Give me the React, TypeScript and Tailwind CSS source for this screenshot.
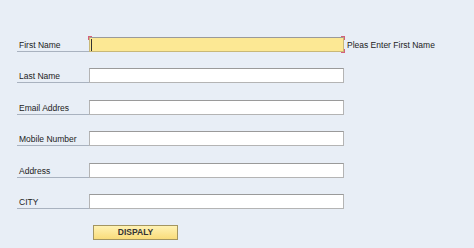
import React from 'react';

const font = { fontFamily: '"Liberation Sans", Arial, sans-serif' };

const fields = ['First Name', 'Last Name', 'Email Addres', 'Mobile Number', 'Address', 'CITY'];

function Field({ label, focused }: { label: string; focused?: boolean }) {
  return (
    <div className="flex items-end h-[15px]">
      <div className="w-[72px] border-b border-[#a9b2bf] pl-[2px] pb-[1px] text-[8.5px] leading-[10px] text-[#222]">
        {label}
      </div>
      <div
        className={`relative w-[255px] h-[15px] border border-[#b4b4b4] border-t-[#9a9a9a] ${
          focused ? 'bg-[#fce894] border-[#c9b877]' : 'bg-white'
        }`}
      >
        {focused && (
          <>
            <span className="absolute left-[1px] top-[1px] w-px h-[12px] bg-[#333]" />
            <span className="absolute -left-[2px] -top-[2px] w-[4px] h-[4px] border-l border-t border-[#d4607a]" />
            <span className="absolute -right-[2px] -top-[2px] w-[4px] h-[4px] border-r border-t border-[#d4607a]" />
            <span className="absolute -right-[2px] -bottom-[2px] w-[4px] h-[4px] border-r border-b border-[#d4607a]" />
          </>
        )}
      </div>
      {focused && (
        <span className="ml-[3px] pb-[2px] text-[8.5px] leading-[10px] text-[#222] whitespace-nowrap">
          Pleas Enter First Name
        </span>
      )}
    </div>
  );
}

export default function App() {
  return (
    <div className="w-[474px] h-[248px] bg-[#e8eef6] overflow-hidden" style={font}>
      <div className="pt-[37px] pl-[17px] flex flex-col gap-[16.4px]">
        {fields.map((f, i) => (
          <Field key={f} label={f} focused={i === 0} />
        ))}
        <div className="flex pl-[76px]">
          <button className="block w-[85px] h-[15px] border border-[#a39561] bg-gradient-to-b from-[#fff2b3] to-[#f9dc7a] text-[8.5px] leading-[13px] font-bold text-[#333]">
            DISPALY
          </button>
        </div>
      </div>
    </div>
  );
}
